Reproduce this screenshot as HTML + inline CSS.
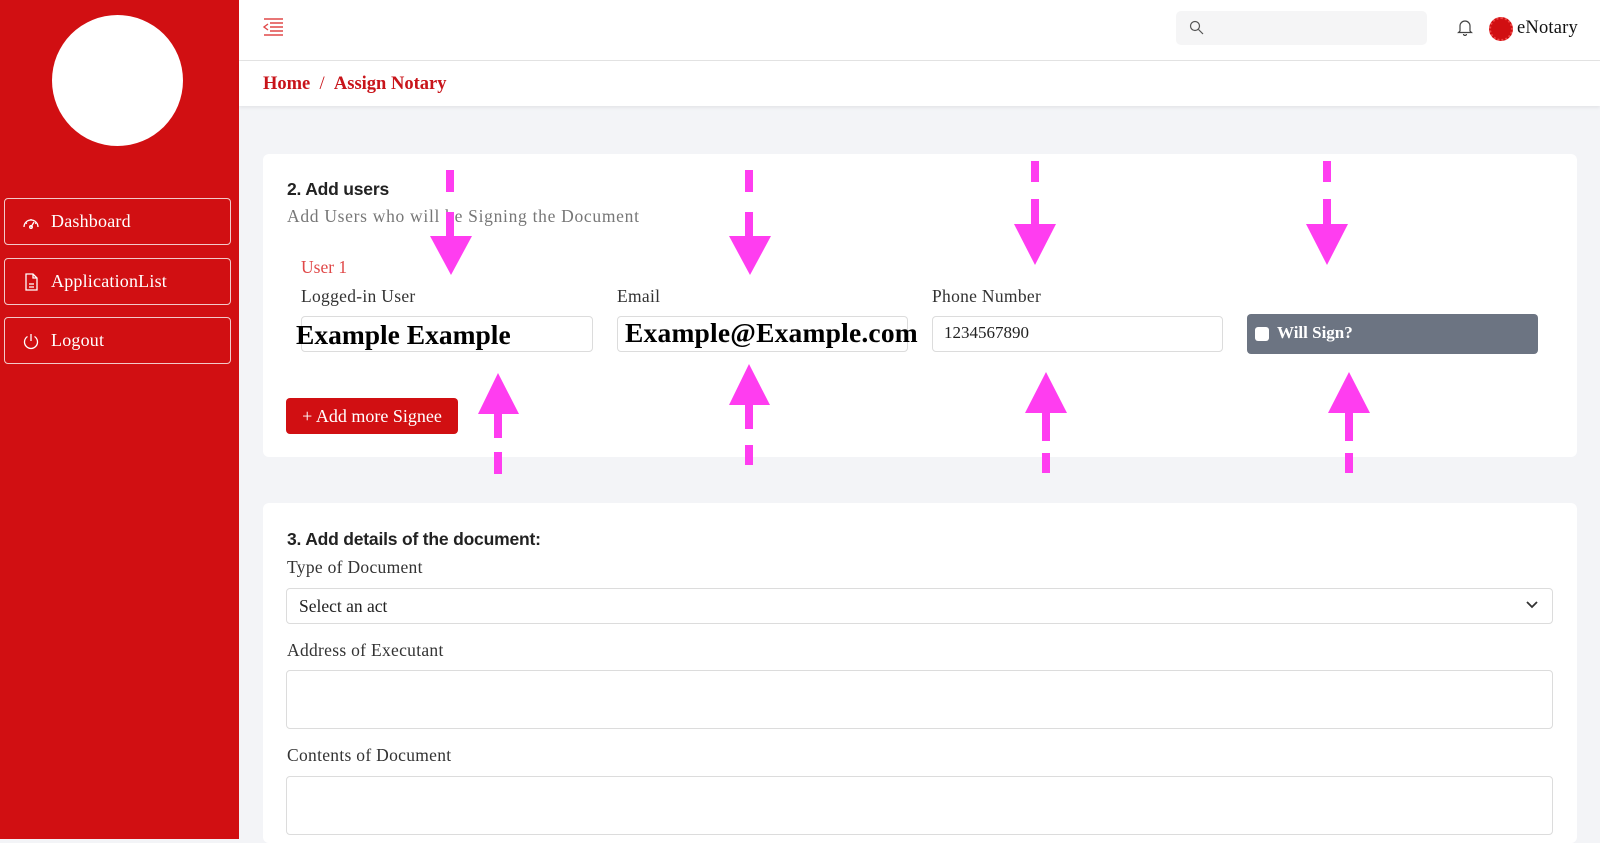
<!DOCTYPE html>
<html><head><meta charset="utf-8"><style>
*{box-sizing:border-box;margin:0;padding:0}
body{width:1600px;height:839px;overflow:hidden;background:#f3f4f7;font-family:"Liberation Serif",serif;position:relative;color:#333}
.abs{position:absolute}
#side{left:0;top:0;width:239px;height:839px;background:#d10f12}
.circ{left:52px;top:15px;width:131px;height:131px;border-radius:50%;background:#fff}
.nav{left:4px;width:227px;height:47px;border:1.5px solid #f3c9c9;border-radius:4px;color:#fff;font-size:18px;display:flex;align-items:center;padding-left:16px;letter-spacing:.2px}
.nav svg{margin-right:10px}
#top{left:239px;top:0;width:1361px;height:61px;background:#fff;border-bottom:1px solid #e3e3e3}
#bc{left:239px;top:61px;width:1361px;height:45px;background:#fff;box-shadow:0 2px 3px rgba(0,0,0,.06)}
.card{background:#fff;border-radius:6px}
.h{font-family:"Liberation Sans",sans-serif;font-weight:bold;font-size:17.5px;color:#222;letter-spacing:-.2px}
.lbl{font-size:17.5px;color:#333;letter-spacing:.3px}
.inp{border:1px solid #dcdcdc;border-radius:4px;background:#fff}
</style></head><body>
<div id="side" class="abs">
 <div class="abs circ"></div>
 <div class="abs nav" style="top:198px"><svg width="20" height="20" viewBox="0 0 20 20" fill="none" stroke="#fff" stroke-width="1.3"><path d="M3 15a7 7 0 1 1 14 0"/><path d="M10 15l3-5"/><circle cx="10" cy="15" r="1.3"/><path d="M5 11l1 .5M10 7v1.2M15 11l-1 .5"/></svg>Dashboard</div>
 <div class="abs nav" style="top:258px"><svg width="20" height="20" viewBox="0 0 20 20" fill="none" stroke="#fff" stroke-width="1.3"><path d="M5 2h7l4 4v12H5z"/><path d="M12 2v4h4M8 12h5M8 15h5"/></svg>ApplicationList</div>
 <div class="abs nav" style="top:317px"><svg width="20" height="20" viewBox="0 0 20 20" fill="none" stroke="#fff" stroke-width="1.3"><path d="M6.5 5.5a6.5 6.5 0 1 0 7 0"/><path d="M10 3v7"/></svg>Logout</div>
</div>
<div id="top" class="abs">
 <svg class="abs" style="left:23px;top:17px" width="22" height="20" viewBox="0 0 22 20" fill="none" stroke="#e04848" stroke-width="1.4"><path d="M2 2h19M8 6h13M8 10h13M8 14h13M2 18h19M6 7l-4 3 4 3"/></svg>
 <div class="abs" style="left:937px;top:11px;width:251px;height:34px;background:#f5f5f6;border-radius:5px"></div>
 <svg class="abs" style="left:950px;top:20px" width="16" height="16" viewBox="0 0 16 16" fill="none" stroke="#555" stroke-width="1.2"><circle cx="6" cy="6" r="4.5"/><path d="M9.5 9.5l4.5 4.5"/></svg>
 <svg class="abs" style="left:1218px;top:18px" width="16" height="18" viewBox="0 0 16 18" fill="none" stroke="#444" stroke-width="1.2"><path d="M3 13V8a5 5 0 0 1 10 0v5l1.5 1.5h-13z"/><path d="M6.5 16a1.5 1.5 0 0 0 3 0"/></svg>
 <div class="abs" style="left:1250px;top:17px;width:24px;height:24px;border-radius:50%;background:#d10f12;border:2px dotted #e44"></div>
 <div class="abs" style="left:1278px;top:18px;font-size:18.5px;color:#111;letter-spacing:.2px">eNotary</div>
</div>
<div id="bc" class="abs"><div class="abs" style="left:24px;top:13px;font-size:18.5px;color:#c8141a;font-weight:bold">Home&nbsp; <span style="font-weight:normal">/</span> &nbsp;Assign Notary</div></div>

<div class="abs card" style="left:263px;top:154px;width:1314px;height:303px"></div>
<div class="abs h" style="left:287px;top:179px">2. Add users</div>
<div class="abs" style="left:287px;top:206px;font-size:17.5px;color:#777;letter-spacing:.7px">Add Users who will be Signing the Document</div>
<div class="abs" style="left:301px;top:257px;font-size:17.5px;color:#e04848">User 1</div>
<div class="abs lbl" style="left:301px;top:286px">Logged-in User</div>
<div class="abs lbl" style="left:617px;top:286px">Email</div>
<div class="abs lbl" style="left:932px;top:286px">Phone Number</div>
<div class="abs inp" style="left:301px;top:316px;width:292px;height:36px"></div>
<div class="abs inp" style="left:617px;top:316px;width:291px;height:36px"></div>
<div class="abs inp" style="left:932px;top:316px;width:291px;height:36px"></div>
<div class="abs" style="left:296px;top:319px;font-size:27.5px;font-weight:bold;color:#000">Example Example</div>
<div class="abs" style="left:625px;top:317px;font-size:27.5px;font-weight:bold;color:#000;letter-spacing:.2px">Example@Example.com</div>
<div class="abs" style="left:944px;top:323px;font-size:17px;color:#222">1234567890</div>
<div class="abs" style="left:1247px;top:314px;width:291px;height:40px;background:#6c7482;border-radius:4px"></div>
<div class="abs" style="left:1255px;top:327px;width:14px;height:14px;background:#fff;border-radius:3px"></div>
<div class="abs" style="left:1277px;top:323px;font-size:17px;color:#fff;font-weight:bold">Will Sign?</div>
<div class="abs" style="left:286px;top:398px;width:172px;height:36px;background:#d10f12;border-radius:4px;color:#fff;font-size:18px;text-align:center;line-height:36px">+ Add more Signee</div>

<div class="abs card" style="left:263px;top:503px;width:1314px;height:340px"></div>
<div class="abs h" style="left:287px;top:529px">3. Add details of the document:</div>
<div class="abs lbl" style="left:287px;top:557px">Type of Document</div>
<div class="abs inp" style="left:286px;top:588px;width:1267px;height:36px;font-size:17.5px;padding:7px 12px;color:#222">Select an act</div>
<svg class="abs" style="left:1525px;top:600px" width="14" height="10" viewBox="0 0 14 10" fill="none" stroke="#333" stroke-width="1.8"><path d="M2 2l5 5 5-5"/></svg>
<div class="abs lbl" style="left:287px;top:640px">Address of Executant</div>
<div class="abs inp" style="left:286px;top:670px;width:1267px;height:59px"></div>
<div class="abs lbl" style="left:287px;top:745px">Contents of Document</div>
<div class="abs inp" style="left:286px;top:776px;width:1267px;height:59px"></div>

<svg class="abs" style="left:0;top:0" width="1600" height="839">
<g fill="#ff3df0">
 <rect x="446" y="170" width="8" height="22"/><rect x="446" y="212" width="8" height="24"/><polygon points="430,236 472,236 451,275"/>
 <rect x="745" y="170" width="8" height="22"/><rect x="745" y="212" width="8" height="24"/><polygon points="729,236 771,236 750,275"/>
 <rect x="1031" y="161" width="8" height="21"/><rect x="1031" y="199" width="8" height="25"/><polygon points="1014,224 1056,224 1035,265"/>
 <rect x="1323" y="161" width="8" height="21"/><rect x="1323" y="199" width="8" height="25"/><polygon points="1306,224 1348,224 1327,265"/>
 <polygon points="498,373 478,414 519,414"/><rect x="494" y="414" width="8" height="24"/><rect x="494" y="452" width="8" height="22"/>
 <polygon points="749,364 729,405 770,405"/><rect x="745" y="405" width="8" height="24"/><rect x="745" y="445" width="8" height="20"/>
 <polygon points="1046,372 1025,413 1067,413"/><rect x="1042" y="413" width="8" height="28"/><rect x="1042" y="453" width="8" height="20"/>
 <polygon points="1349,372 1328,413 1370,413"/><rect x="1345" y="413" width="8" height="28"/><rect x="1345" y="453" width="8" height="20"/>
</g></svg>
</body></html>
